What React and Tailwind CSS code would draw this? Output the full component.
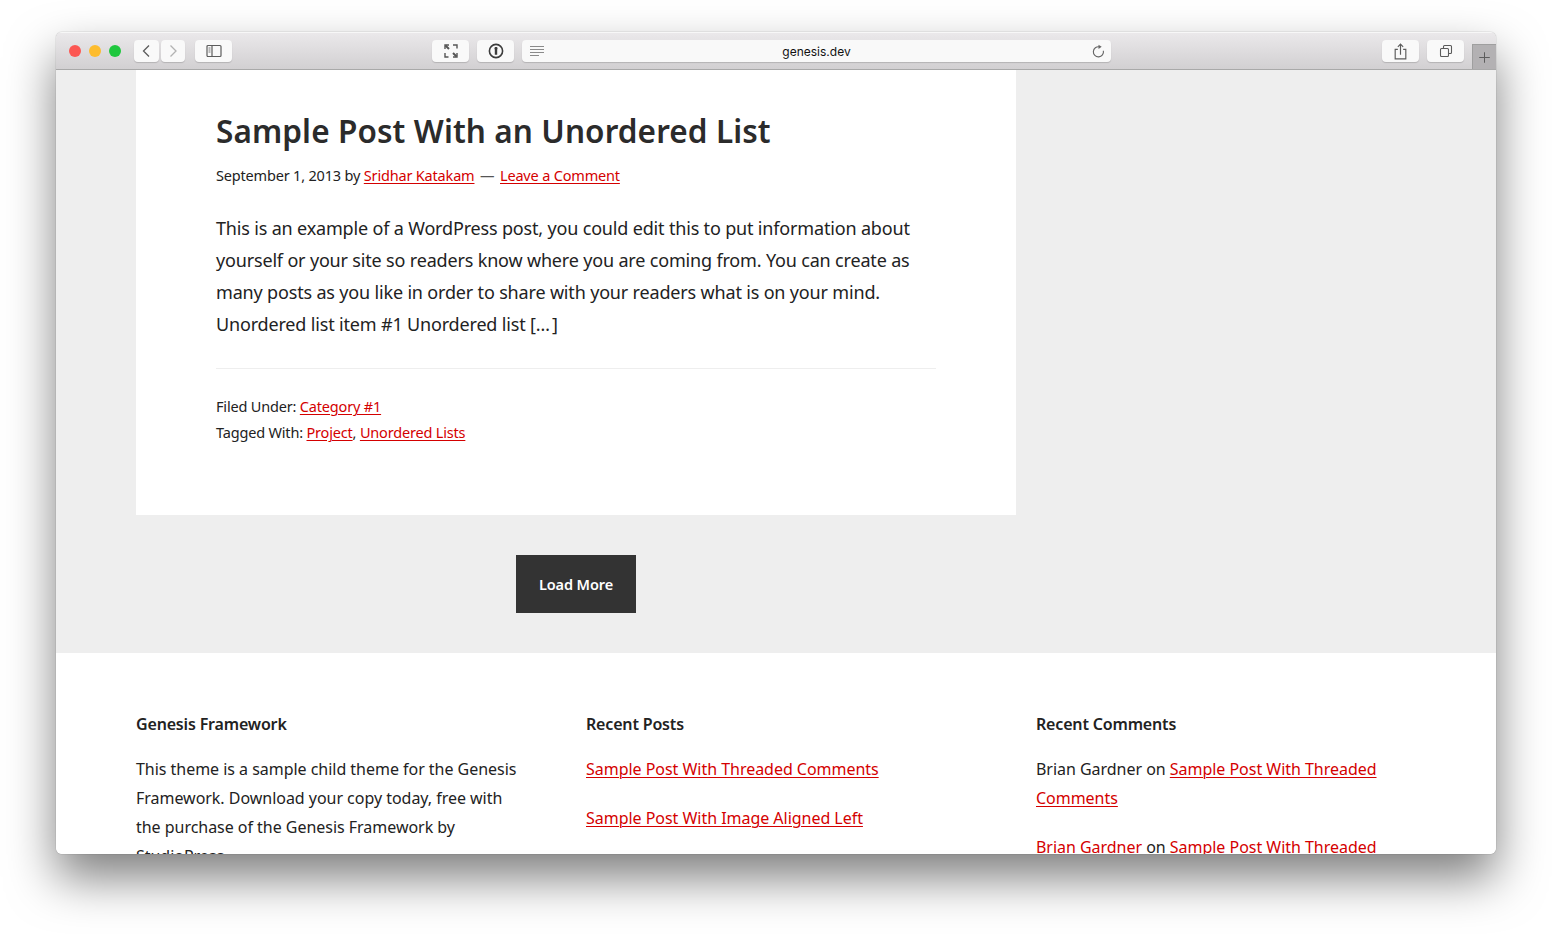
import React from "react";

const A = ({ children }) => <a className="text-[#d40000] underline decoration-1 underline-offset-2">{children}</a>;

const Btn = ({ w, className = "", children }) => (
  <div className={`h-[22px] ${w} shrink-0 flex items-center justify-center rounded-[4px] bg-[#f9f9f9] shadow-[0_1px_1px_rgba(0,0,0,0.16)] ${className}`}>{children}</div>
);

const Ico = ({ s = 16, children, c = "#5c5c5c", sw = 1.2 }) => (
  <svg width={s} height={s} viewBox="0 0 16 16" fill="none" stroke={c} strokeWidth={sw}>{children}</svg>
);

const Toolbar = () => (
  <div className="relative h-[38px] shrink-0 flex items-start pt-[8px] bg-gradient-to-b from-[#ebe9eb] to-[#d2d0d2] border-b border-[#a9a9a9] shadow-[inset_0_1px_0_#f7f7f7]">
    <div className="ml-[13px] mt-[5px] flex gap-[8px]">
      <div className="w-[12px] h-[12px] rounded-full bg-[#fc5753]" />
      <div className="w-[12px] h-[12px] rounded-full bg-[#fdbc2e]" />
      <div className="w-[12px] h-[12px] rounded-full bg-[#1fc73e]" />
    </div>
    <Btn w="w-[25px]" className="ml-[13px]">
      <Ico><path d="M10 2.5 L4.5 8 L10 13.5" strokeWidth="1.3" /></Ico>
    </Btn>
    <Btn w="w-[24px]" className="ml-[2px]">
      <Ico c="#b2b2b2"><path d="M5.5 2.5 L11 8 L5.5 13.5" strokeWidth="1.3" /></Ico>
    </Btn>
    <Btn w="w-[37px]" className="ml-[10px]">
      <Ico s={16}>
        <rect x="1" y="2.5" width="14" height="11" rx="1" />
        <path d="M6 2.5 V13.5" />
        <path d="M2.5 5 H4.5 M2.5 7 H4.5 M2.5 9 H4.5" strokeWidth="0.8" />
      </Ico>
    </Btn>
    <Btn w="w-[37px]" className="ml-[200px]">
      <Ico s={16} sw={1.4} c="#555555">
        <path d="M2 6 V2 H6 M10 2 H14 V5.5 M2 10 V14 H5.5 M14 10 V14 H10" />
        <path d="M2.5 2.5 L6 6 M13.5 13.5 L10 10" strokeWidth="2" />
      </Ico>
    </Btn>
    <Btn w="w-[37px]" className="ml-[8px]">
      <Ico s={16} sw={1.6} c="#3c3c3c">
        <circle cx="8" cy="8" r="6.6" />
        <path d="M8 4.2 V11.8" strokeWidth="2.4" />
        <circle cx="8" cy="5.4" r="1.4" fill="#3c3c3c" stroke="none" />
      </Ico>
    </Btn>
    <div className="ml-[8px] h-[22px] w-[589px] shrink-0 flex items-center rounded-[4px] bg-[#f9f9f9] shadow-[0_1px_1px_rgba(0,0,0,0.16)] pl-[7px] pr-[5px]">
      <Ico s={16} c="#8a8a8a" sw={1}>
        <path d="M1 3.5 H15 M1 6.5 H15 M1 9.5 H15 M1 12.5 H10" />
      </Ico>
      <span className="flex-1 text-center text-[12px] leading-[22px] text-[#111111] font-['Inter',sans-serif] pl-[2px] pr-[5px] mt-[1px]">genesis.dev</span>
      <Ico s={15} c="#666666" sw={1.2}>
        <path d="M9 3 A5.4 5.4 0 1 0 13.2 7.2" />
        <path d="M8 0.8 L11.4 3 L8 5.2 Z" fill="#666666" stroke="none" />
      </Ico>
    </div>
    <div className="flex-1" />
    <Btn w="w-[37px]" className="">
      <Ico s={17} c="#5c5c5c" sw={1.1}>
        <path d="M5.5 6 H3 V15 H13 V6 H10.5" />
        <path d="M8 11 V1.2 M5.5 3.6 L8 1.1 L10.5 3.6" />
      </Ico>
    </Btn>
    <Btn w="w-[37px]" className="ml-[8px] mr-[32px]">
      <Ico s={16} c="#5c5c5c" sw={1.1}>
        <rect x="2.5" y="5.5" width="8" height="8" rx="1" />
        <path d="M5.5 5 V3.5 A1 1 0 0 1 6.5 2.5 H12.5 A1 1 0 0 1 13.5 3.5 V9.5 A1 1 0 0 1 12.5 10.5 H11" />
      </Ico>
    </Btn>
    <div className="absolute right-0 bottom-0 w-[24px] h-[25px] bg-[#b3b1b3] border-l border-t border-[#9f9f9f] flex items-center justify-center">
      <Ico s={13} c="#5d5d5d" sw={1.3}><path d="M8 1.5 V14.5 M1.5 8 H14.5" /></Ico>
    </div>
  </div>
);

export default function App() {
  return (
    <div className="h-[934px] overflow-hidden bg-white pt-[32px] px-[56px] font-['Noto_Sans',sans-serif] text-[#222222]">
      <div className="h-[822px] flex flex-col overflow-hidden rounded-[6px] bg-white shadow-[0_24px_48px_rgba(0,0,0,0.5),0_0_1px_rgba(0,0,0,0.55)]">
        <Toolbar />
        <div className="flex-1 overflow-hidden">
          <div className="bg-[#eeeeee] pb-[40px]">
            <div className="ml-[80px] w-[880px] h-[445px] bg-white pl-[80px] pt-[36px]">
              <h1 className="text-[31.5px] leading-[50px] font-semibold text-[#2b2b2b] tracking-[0.1px] whitespace-nowrap">Sample Post With an Unordered List</h1>
              <p className="mt-[6px] text-[14.5px] leading-[26px] whitespace-nowrap tracking-[-0.18px]">
                September 1, 2013 by <A>Sridhar Katakam</A> <span className="mx-[2px] text-[#555]">—</span> <A>Leave a Comment</A>
              </p>
              <p className="mt-[24px] text-[18px] leading-[32px] whitespace-nowrap tracking-[-0.17px]">
                This is an example of a WordPress post, you could edit this to put information about<br />
                yourself or your site so readers know where you are coming from. You can create as<br />
                many posts as you like in order to share with your readers what is on your mind.<br />
                Unordered list item #1 Unordered list [<span className="tracking-[2px]">…</span>]
              </p>
              <div className="mt-[28px] w-[720px] border-t border-[#eeeeee]" />
              <p className="mt-[24px] text-[14.5px] leading-[26px] whitespace-nowrap tracking-[-0.18px]">
                Filed Under: <A>Category #1</A><br />
                Tagged With: <A>Project</A>, <A>Unordered Lists</A>
              </p>
            </div>
            <div className="mt-[40px] ml-[460px] w-[120px] h-[58px] bg-[#333333] text-white flex items-center justify-center pt-[1px] text-[14.5px] font-semibold tracking-[-0.1px]">Load More</div>
          </div>
          <div className="bg-white px-[80px] pt-[57px] flex text-[16px] leading-[29px] whitespace-nowrap tracking-[-0.03px]">
            <div className="w-[450px]">
              <h4 className="font-semibold mb-[16px] tracking-[-0.17px]">Genesis Framework</h4>
              <p>This theme is a sample child theme for the Genesis<br />Framework. Download your copy today, free with<br />the purchase of the Genesis Framework by<br />StudioPress.</p>
            </div>
            <div className="w-[450px]">
              <h4 className="font-semibold mb-[16px] tracking-[-0.17px]">Recent Posts</h4>
              <p><A>Sample Post With Threaded Comments</A></p>
              <p className="mt-[20px]"><A>Sample Post With Image Aligned Left</A></p>
            </div>
            <div>
              <h4 className="font-semibold mb-[16px] tracking-[-0.17px]">Recent Comments</h4>
              <p>Brian Gardner on <A>Sample Post With Threaded</A><br /><A>Comments</A></p>
              <p className="mt-[20px]"><A>Brian Gardner</A> on <A>Sample Post With Threaded</A></p>
            </div>
          </div>
        </div>
      </div>
    </div>
  );
}
